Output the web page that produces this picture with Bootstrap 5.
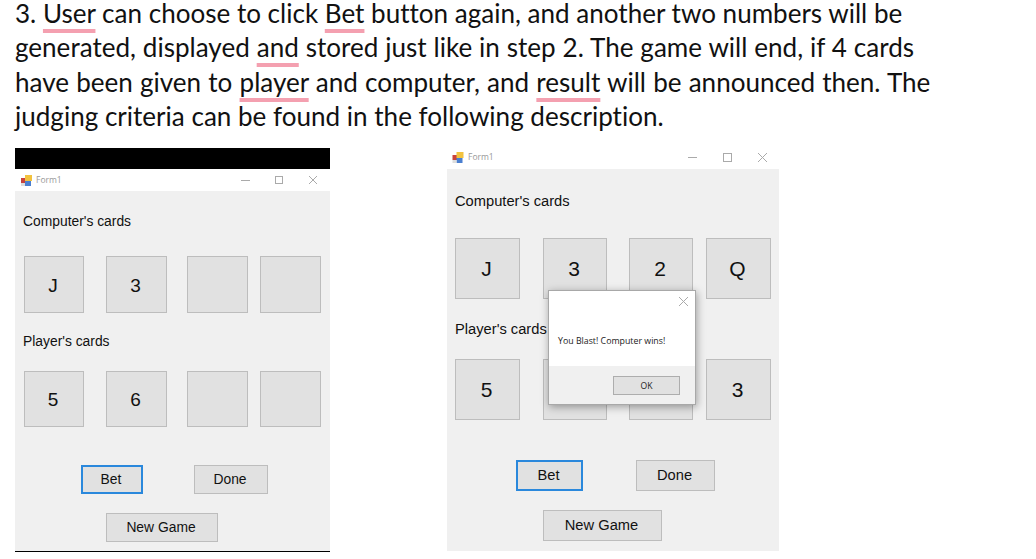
<!DOCTYPE html>
<html lang="en">
  <head>
    <meta charset="UTF-8" />
    <meta name="viewport" content="width=device-width, initial-scale=1.0" />
    <title>Game description</title>
    <link href="https://cdn.jsdelivr.net/npm/bootstrap@5.3.0/dist/css/bootstrap.min.css" rel="stylesheet" />
    <style>
      body { background: #fff; color: #000; overflow: hidden; }
      .doc-text {
        font-family: Lato, "Liberation Sans", sans-serif;
        font-size: 26.05px;
        font-variant-ligatures: none;
        line-height: 34.4px;
        height: 148px;
        padding: 0 0 0 15px;
        margin: 0;
        white-space: nowrap;
        color: #111;
      }
      .doc-first { display: block; line-height: 26.4px; margin-bottom: 4px; }
      .doc-second { display: block; word-spacing: 0.25px; }
      .doc-third { display: block; word-spacing: 0.5px; }
      .squiggle {
        text-decoration: underline;
        text-decoration-color: #f4a0b0;
        text-decoration-thickness: 4px;
        text-underline-offset: 6px;
        text-decoration-skip-ink: none;
      }
      .desk { height: 404px; align-items: flex-end; padding-left: 15px; }
      .win { background: #fff; position: relative; font-family: "Liberation Sans", Arial, sans-serif; }
      .win-a { width: 315px; }
      .win-b { width: 332px; margin-left: 117px; }
      .blackout { height: 21px; background: #000; }
      .title-strip { height: 22px; font-family: "Open Sans", sans-serif; font-size: 8.5px; color: #999; }
      .title-strip svg { flex: none; }
      .win-b .title-strip { padding-bottom: 2px; }
      .form-face { background: #f0f0f0; color: #111; padding-left: 8px; }
      .win-a .form-face { height: 360px; padding-top: 20px; font-size: 13.85px; }
      .win-b .form-face { height: 382px; padding-top: 22px; font-size: 14.7px; }
      .win-a-end { height: 1px; background: #000; }
      .form-label-line { height: 20px; line-height: 20px; }
      .tile, .form-btn {
        --bs-btn-padding-x: 0;
        --bs-btn-padding-y: 0;
        --bs-btn-border-radius: 0;
        background: #e1e1e1;
        border: 1px solid #bdbdbd;
        color: #111;
        flex: none;
        padding-right: 2px;
      }
      .tile-row-a { margin-left: 1px; }
      .win-a .tile { width: 61px; height: 57px; font-size: 19px; line-height: 57px; }
      .win-a .tile-row-low .tile { height: 56px; line-height: 55px; }
      .win-b .tile { width: 65px; height: 61px; font-size: 21px; line-height: 60px; }
      .win-a .form-btn { height: 29px; font-size: 13.85px; }
      .win-b .form-btn { height: 31px; font-size: 14.7px; }
      .form-btn.is-focused { border: 2px solid #2a88dc; }
      .dialog-box {
        position: absolute;
        left: 101px;
        top: 143px;
        width: 148px;
        height: 115px;
        background: #f0f0f0;
        border: 1px solid #a8a8a8;
        box-shadow: 1px 2px 8px rgba(0, 0, 0, 0.35);
      }
      .dialog-main {
        height: 75px;
        background: #fff;
        font-family: "Open Sans", sans-serif;
        font-size: 8.8px;
        color: #222;
        padding: 44px 0 0 9px;
        position: relative;
        white-space: nowrap;
        line-height: 12px;
      }
      .dialog-x { position: absolute; right: 7px; top: 6px; }
      .dialog-ok {
        --bs-btn-padding-x: 0;
        --bs-btn-padding-y: 0;
        --bs-btn-border-radius: 0;
        width: 67px;
        height: 19px;
        margin: 10px 0 0 64px;
        background: #e1e1e1;
        border: 1px solid #adadad;
        font-family: "Open Sans", sans-serif;
        font-size: 8.6px;
        line-height: 16px;
        color: #222;
        display: block;
      }
    </style>
  </head>

  <body class="m-0">
    <p class="doc-text">
      <span class="doc-first">3. <span class="squiggle">User</span> can choose to click <span class="squiggle">Bet</span> button again, and another two numbers will be</span>
      <span class="doc-second">generated, displayed <span class="squiggle">and</span> stored just like in step 2. The game will end, if 4 cards</span>
      <span class="doc-third">have been given to <span class="squiggle">player</span> and computer, and <span class="squiggle">result</span> will be announced then. The</span>
      judging criteria can be found in the following description.
    </p>

    <div class="desk d-flex">
      <div class="win win-a">
        <div class="blackout"></div>
        <div class="title-strip d-flex align-items-center">
          <svg style="margin-left: 6px" width="11" height="11" viewBox="0 0 11 11"><rect x="0" y="3" width="5" height="5" fill="#c9433c"/><rect x="4" y="0" width="7" height="6" fill="#f2c23e"/><rect x="4" y="6" width="6" height="5" fill="#4a7fd0"/><rect x="0" y="8" width="4" height="3" fill="#ddd"/></svg>
          <span class="ms-1">Form1</span>
          <svg class="ms-auto" width="9" height="9" viewBox="0 0 9 9"><path d="M0 4.5H9" stroke="#aaa"/></svg>
          <svg style="margin-left: 25px" width="8" height="8" viewBox="0 0 8 8"><rect x=".5" y=".5" width="7" height="7" fill="none" stroke="#aaa"/></svg>
          <svg style="margin-left: 26px; margin-right: 13px" width="8" height="8" viewBox="0 0 8 8"><path d="M0 0L8 8M8 0L0 8" stroke="#aaa"/></svg>
        </div>
        <div class="form-face">
          <div class="form-label-line">Computer's cards</div>
          <div class="d-flex tile-row-a" style="margin-top: 25px">
            <button class="btn tile" style="width: 60px">J</button>
            <button class="btn tile" style="margin-left: 22px">3</button>
            <button class="btn tile" style="margin-left: 20px"></button>
            <button class="btn tile" style="margin-left: 12px"></button>
          </div>
          <div class="form-label-line" style="margin-top: 18px">Player's cards</div>
          <div class="d-flex tile-row-a tile-row-low" style="margin-top: 20px">
            <button class="btn tile" style="width: 60px">5</button>
            <button class="btn tile" style="margin-left: 22px">6</button>
            <button class="btn tile" style="margin-left: 20px"></button>
            <button class="btn tile" style="margin-left: 12px"></button>
          </div>
          <div class="d-flex" style="margin-top: 38px">
            <button class="btn form-btn is-focused" style="width: 62px; margin-left: 58px">Bet</button>
            <button class="btn form-btn" style="width: 74px; margin-left: 51px">Done</button>
          </div>
          <div class="d-flex" style="margin-top: 19px">
            <button class="btn form-btn" style="width: 112px; margin-left: 83px">New Game</button>
          </div>
        </div>
        <div class="win-a-end"></div>
      </div>

      <div class="win win-b" style="margin-bottom: 1px">
        <div class="title-strip d-flex align-items-center">
          <svg style="margin-left: 5px" width="12" height="11" viewBox="0 0 11 11"><rect x="0" y="3" width="5" height="5" fill="#c9433c"/><rect x="4" y="0" width="7" height="6" fill="#f2c23e"/><rect x="4" y="6" width="6" height="5" fill="#4a7fd0"/><rect x="0" y="8" width="4" height="3" fill="#ddd"/></svg>
          <span class="ms-1">Form1</span>
          <svg class="ms-auto" width="9" height="9" viewBox="0 0 9 9"><path d="M0 4.5H9" stroke="#aaa"/></svg>
          <svg style="margin-left: 26px" width="9" height="9" viewBox="0 0 9 9"><rect x=".5" y=".5" width="8" height="8" fill="none" stroke="#aaa"/></svg>
          <svg style="margin-left: 26px; margin-right: 12px" width="9" height="9" viewBox="0 0 9 9"><path d="M0 0L9 9M9 0L0 9" stroke="#aaa"/></svg>
        </div>
        <div class="form-face">
          <div class="form-label-line">Computer's cards</div>
          <div class="d-flex" style="margin-top: 27px">
            <button class="btn tile">J</button>
            <button class="btn tile" style="width: 64px; margin-left: 23px">3</button>
            <button class="btn tile" style="width: 64px; margin-left: 22px">2</button>
            <button class="btn tile" style="margin-left: 13px">Q</button>
          </div>
          <div class="form-label-line" style="margin-top: 20px">Player's cards</div>
          <div class="d-flex" style="margin-top: 20px">
            <button class="btn tile">5</button>
            <button class="btn tile" style="width: 64px; margin-left: 23px"></button>
            <button class="btn tile" style="width: 64px; margin-left: 22px"></button>
            <button class="btn tile" style="margin-left: 13px">3</button>
          </div>
          <div class="d-flex" style="margin-top: 40px">
            <button class="btn form-btn is-focused" style="width: 67px; margin-left: 61px">Bet</button>
            <button class="btn form-btn" style="width: 79px; margin-left: 53px">Done</button>
          </div>
          <div class="d-flex" style="margin-top: 19px">
            <button class="btn form-btn" style="width: 119px; margin-left: 88px">New Game</button>
          </div>
        </div>

        <div class="dialog-box">
          <div class="dialog-main">
            You Blast! Computer wins!
            <svg class="dialog-x" width="9" height="9" viewBox="0 0 9 9"><path d="M0 0L9 9M9 0L0 9" stroke="#aaa"/></svg>
          </div>
          <button class="btn dialog-ok">OK</button>
        </div>
      </div>
    </div>

    <script src="https://cdn.jsdelivr.net/npm/bootstrap@5.3.0/dist/js/bootstrap.bundle.min.js"></script>
  </body>
</html>
